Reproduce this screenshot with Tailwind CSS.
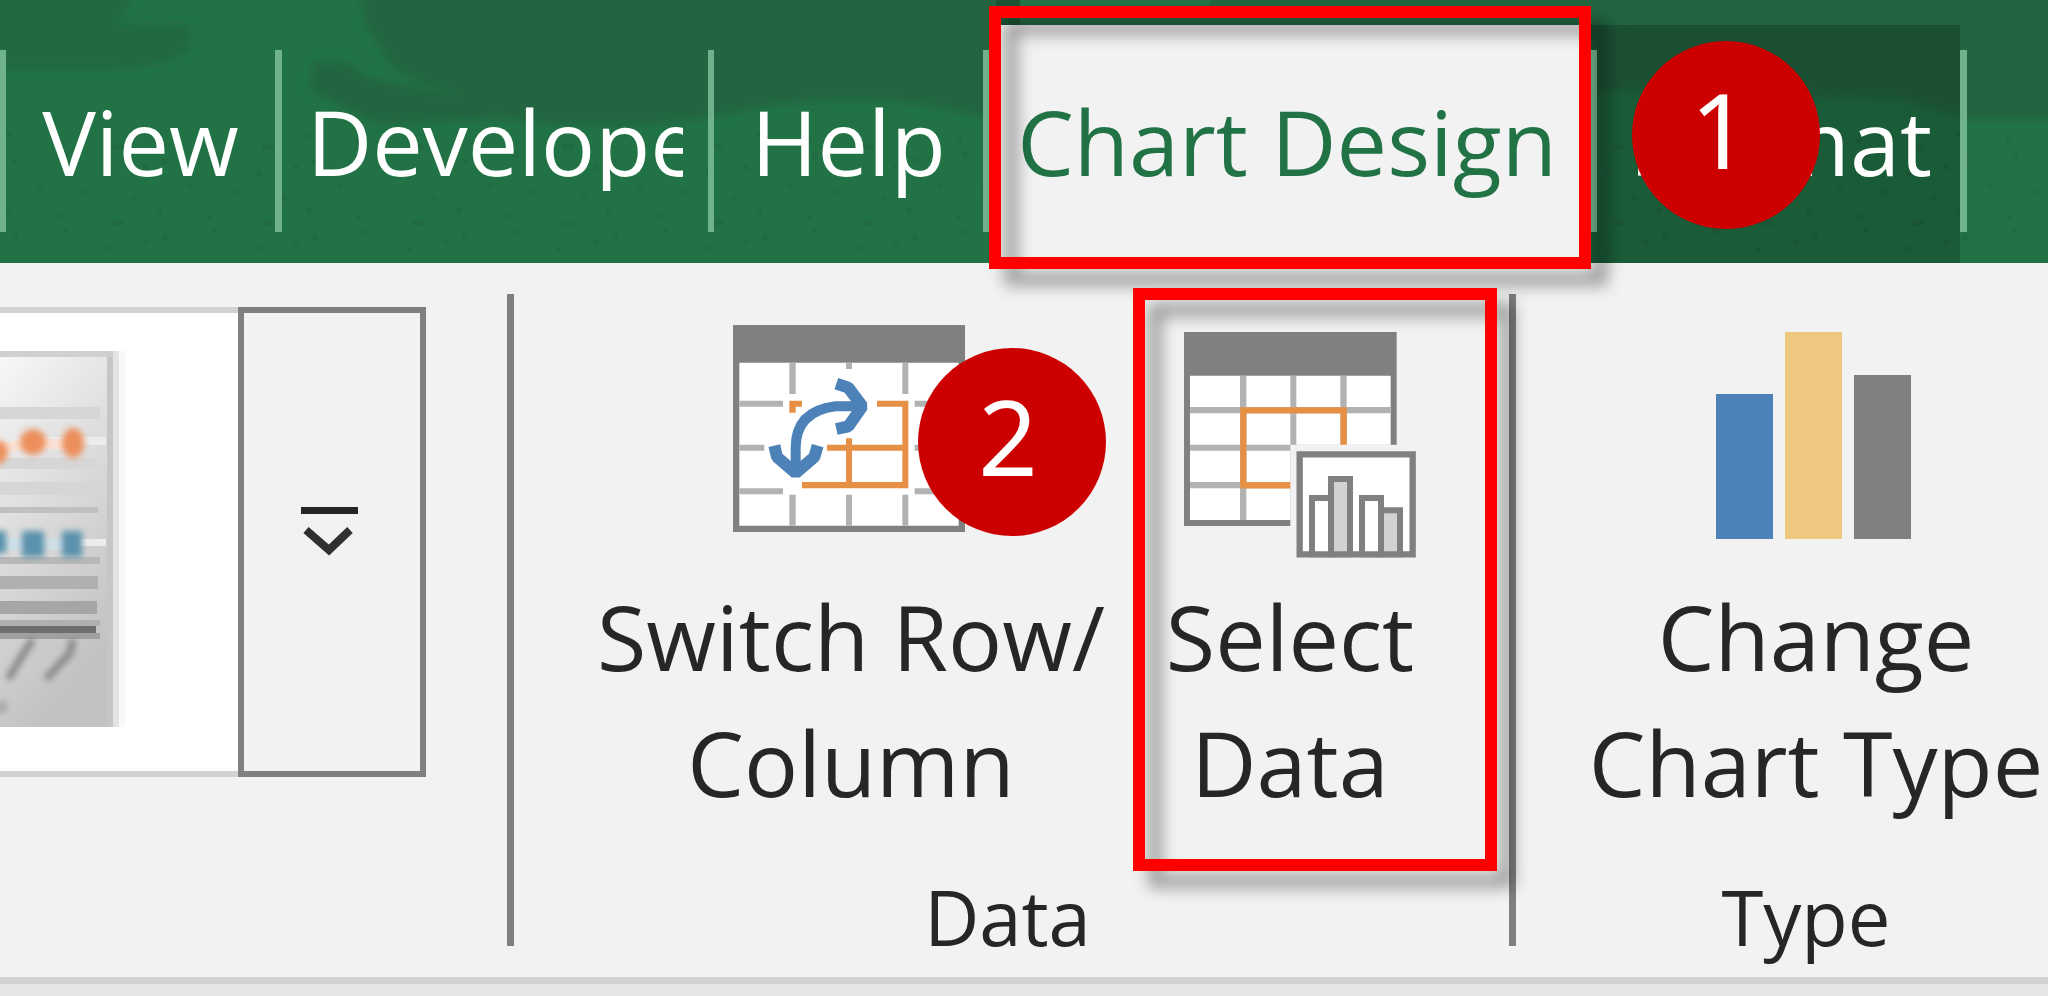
<!DOCTYPE html>
<html lang="en">
<head>
<meta charset="utf-8">
<title>Chart Design ribbon</title>
<script src="https://cdn.jsdelivr.net/npm/@tailwindcss/browser@4"></script>
</head>
<body class="relative flex min-h-screen flex-col overflow-hidden bg-[#e6e6e6] font-['Open_Sans','Noto_Sans',sans-serif] text-[90px] text-[#262626]">

<header class="relative bg-[#217346]">
  <!-- Title bar backdrop -->
  <svg class="absolute inset-0 h-full w-full" viewBox="0 0 2048 263" preserveAspectRatio="none" aria-hidden="true">
    <defs>
      <pattern id="grain" width="150" height="76" patternUnits="userSpaceOnUse">
        <path fill="#216c43" d="M12 6h6v6h-6zM62 0h6v6h-6zM106 18h6v6h-6zM37 31h6v6h-6zM81 37h6v6h-6zM131 43h6v6h-6zM6 56h6v6H6zM56 62h6v6h-6zM112 68h12v6h-12zM143 12h6v6h-6z"/>
      </pattern>
      <filter id="haze"><feGaussianBlur stdDeviation="5"/></filter>
    </defs>
    <g filter="url(#haze)">
      <path fill="#236841" d="M-20-20H138L125 12 110 24 190 25V50L165 62 120 69H-20Z"/>
      <path fill="#246540" d="M358-20H2070V119H1967L1900 100 1800 95 1597 90 989 118H985L960 112 930 106 880 100 830 100 780 104 740 112 700 119 640 125H560L500 118 380 124 345 108 310 90 313 62H345L368 78 410 86 440 92 470 95 425 85 395 70 378 45 365 24Z"/>
    </g>
    <path fill="#217346" d="M1020 0H1210V8H1020Z"/>
    <path fill="#1b5233" d="M996 0H1020V25H996Z"/>
    <path fill="url(#grain)" d="M0 130H2048V256H0Z"/>
  </svg>
  <nav class="relative flex h-[263px] items-stretch text-white" aria-label="Ribbon tabs">
    <span class="mt-[50px] h-[182px] w-[6px] shrink-0 bg-[#6fb28b]"></span>
    <button class="w-[269px] shrink-0 pt-[19px] leading-[100px]">View</button>
    <span class="mt-[50px] h-[182px] w-[7px] shrink-0 bg-[#6fb28b]"></span>
    <button class="w-[426px] shrink-0 pt-[19px] pr-[25px] pl-[25px] leading-[100px]"><span class="block overflow-hidden text-left whitespace-nowrap">Developer</span></button>
    <span class="mt-[50px] h-[182px] w-[6px] shrink-0 bg-[#6fb28b]"></span>
    <button class="w-[269px] shrink-0 pt-[19px] leading-[100px]">Help</button>
    <span class="mt-[50px] h-[182px] w-[6px] shrink-0 bg-[#6fb28b]"></span>
    <button class="mt-[25px] w-[602px] shrink-0 bg-[#f2f2f2] pr-[6px] pb-[6px] leading-[100px] whitespace-nowrap text-[#217346]" aria-current="page">Chart Design</button>
    <div class="mt-[25px] flex w-[369px] shrink-0 bg-black/20">
      <span class="mt-[25px] h-[182px] w-[6px] shrink-0 bg-[#6fb28b]"></span>
      <button class="flex-1 pr-[28px] pb-[6px] text-right leading-[100px]">Format</button>
    </div>
    <span class="mt-[50px] h-[182px] w-[7px] shrink-0 bg-[#6fb28b]"></span>
  </nav>
</header>

<main class="flex h-[721px] border-b-[7px] border-[#d2d2d2] bg-[#f2f2f2]">
  <!-- Chart styles gallery -->
  <section class="flex w-[507px] shrink-0 items-start pt-[44px]" aria-label="Chart Styles">
    <div class="flex h-[470px] w-[238px] items-start border-y-[6px] border-[#d2d2d2] bg-white pt-[38px]">
      <svg class="h-[376px] w-[125px]" viewBox="0 0 125 376" aria-label="Line chart style">
        <defs>
          <linearGradient id="face" x1="0" y1="0" x2="0.35" y2="1">
            <stop offset="0" stop-color="#f8f8f8"/><stop offset=".45" stop-color="#dedede"/><stop offset="1" stop-color="#c2c2c2"/>
          </linearGradient>
          <filter id="soft"><feGaussianBlur stdDeviation="3"/></filter>
        </defs>
        <path fill="#f8f8f8" d="M0 0h125v376H0z"/>
        <path fill="#e4e4e4" d="M0 0h119v376H0z"/>
        <path fill="url(#face)" d="M0 0h113v376H0z"/>
        <path fill="#d0d0d0" d="M0 0h113v6H0z"/>
        <path fill="#c6c6c6" d="M107 6h6v370h-6z"/>
        <path fill="#d6d6d6" d="M0 56h100v12H0zM0 107h96v11H0zM0 131h94v13H0z"/>
        <path fill="#c0c0c0" d="M0 156h98v6H0z"/>
        <path fill="#ececec" d="M0 86h106v8H0zM0 188h106v7H0z"/>
        <path fill="#b8b8b8" d="M0 206h100v7H0z"/>
        <path fill="#b0b0b0" d="M0 225h98v13H0z"/>
        <path fill="#a6a6a6" d="M0 250h97v13H0z"/>
        <path fill="#b0b0b0" d="M0 269h100v6H0z"/>
        <path fill="#6e6e6e" d="M0 275h96v7H0z"/>
        <path fill="#a0a0a0" d="M0 282h100v6H0z"/>
        <path fill="none" stroke="#f9e3d8" stroke-width="10" d="M0 97 34 92 73 94"/>
        <path fill="none" stroke="#cfdfe6" stroke-width="12" d="M0 193H80"/>
        <g filter="url(#soft)">
          <circle cx="33" cy="91" r="13" fill="#ec8f5c"/>
          <ellipse cx="73" cy="92" rx="11" ry="15" fill="#ec8f5c"/>
          <circle cx="-4" cy="101" r="12" fill="#ec8f5c"/>
          <path fill="#5a91ac" d="M22 180h22v26H22zM62 180h20v26H62zM-8 180H6v22H-8z"/>
          <path fill="none" stroke="#858585" stroke-width="7" d="M33 288 22 305 8 328M73 288 70 302 46 328"/>
          <path fill="#aaa" d="M-4 350H7v12H-4z"/>
        </g>
      </svg>
    </div>
    <button class="flex h-[470px] w-[188px] items-center justify-center border-[6px] border-[#808080] pr-[6px] pb-[20px]" aria-label="More chart styles">
      <svg class="h-[50px] w-[57px]" viewBox="0 0 57 50" aria-hidden="true">
        <path fill="#262626" d="M0 0h57v7H0z"/>
        <path fill="none" stroke="#303030" stroke-width="8" d="M5 23 28 43 49 23"/>
      </svg>
    </button>
  </section>

  <span class="mt-[31px] h-[652px] w-[7px] shrink-0 bg-[#808080]"></span>

  <section class="flex w-[995px] shrink-0 flex-col justify-between pt-[62px] pb-[20px]" aria-label="Data">
    <div class="flex pl-[77px]">
      <button class="flex w-[520px] flex-col items-center leading-[126px]">
        <span class="h-[248px] pr-[4px]">
          <svg class="h-[207px] w-[232px]" viewBox="98 76 696 621" aria-hidden="true">
            <path fill="#808080" d="M98 76h696v621H98z"/>
            <path fill="#fff" d="M117 189h658v489H117z"/>
            <path fill="#b2b2b2" d="M267 189h19v94h-19zM437 189h18v19h-18zM606 189h18v94h-18zM117 303h131v18H117zM117 435h75v18h-75zM117 566h131v18H117zM643 303h132v18H643zM643 435h132v18H643zM643 566h132v18H643zM267 585h19v93h-19zM437 585h18v93h-18zM606 585h18v93h-18z"/>
            <path fill="#e69045" fill-rule="evenodd" d="M267 303h38v18h-19v18h-19zM530 303h94v263H305v-19h132v-94h-57v-18h57v-19h18v19h151V321h-76zM455 453v94h151v-94z"/>
            <path fill="none" stroke="#4c82b8" stroke-width="30" d="M480 320H405Q286 335 286 445V510"/>
            <path fill="none" stroke="#4c82b8" stroke-width="36" stroke-linejoin="bevel" d="M408 252 444 264 486 320 444 380 408 388M222 438 230 472 286 520 342 472 352 438"/>
          </svg>
        </span>
        <span class="whitespace-nowrap">Switch Row/<br>Column</span>
      </button>
      <button class="ml-[29px] flex w-[300px] flex-col items-center leading-[126px]">
        <span class="h-[248px] pt-[7px] pl-[20px]">
          <svg class="h-[226px] w-[232px]" viewBox="192 156 696 678" aria-hidden="true">
            <path fill="#808080" d="M192 156h638v582H192z"/>
            <path fill="#fff" d="M210 287h602v433H210z"/>
            <path fill="#b2b2b2" d="M360 287h19v433h-19zM511 287h18v433h-18zM661 287h19v433h-19zM210 381h602v19H210zM210 494h602v18H210zM210 606h602v19H210z"/>
            <path fill="none" stroke="#e69045" stroke-width="19" d="M370 391h301v225H370z"/>
            <path fill="#f2f2f2" d="M511 494h380v345H511z"/>
            <path fill="#fff" stroke="#808080" stroke-width="19" d="M539 523h339v300H539z"/>
            <path fill="#fff" stroke="#808080" stroke-width="18" d="M576 654h57v169h-57zM726 654h57v169h-57z"/>
            <path fill="#d2d2d2" stroke="#808080" stroke-width="18" d="M633 597h57v226h-57zM783 691h57v132h-57z"/>
          </svg>
        </span>
        <span>Select<br>Data</span>
      </button>
    </div>
    <h2 class="pr-[8px] text-center text-[76px] leading-[80px]">Data</h2>
  </section>

  <span class="mt-[31px] h-[652px] w-[7px] shrink-0 bg-[#808080]"></span>

  <section class="flex flex-1 flex-col justify-between pt-[62px] pb-[20px]" aria-label="Type">
    <button class="flex flex-col items-center pl-[68px] leading-[126px]">
      <span class="h-[248px] pt-[7px] pr-[6px]">
        <svg class="h-[207px] w-[195px]" viewBox="0 0 195 207" aria-hidden="true">
          <path fill="#4c82b8" d="M0 62h57v145H0z"/>
          <path fill="#edc87e" d="M69 0h57v207H69z"/>
          <path fill="#808080" d="M138 43h57v164h-57z"/>
        </svg>
      </span>
      <span class="whitespace-nowrap">Change<br>Chart Type</span>
    </button>
    <h2 class="pl-[48px] text-center text-[76px] leading-[80px]">Type</h2>
  </section>
</main>

<!-- Step callouts laid over the ribbon -->
<div class="pointer-events-none absolute top-[6px] left-[989px] h-[263px] w-[602px] border-[12px] border-[#ff0000] drop-shadow-[16px_16px_8px_rgba(0,0,0,0.4)]"></div>
<div class="pointer-events-none absolute top-[288px] left-[1133px] h-[583px] w-[364px] border-[12px] border-[#ff0000] drop-shadow-[16px_16px_8px_rgba(0,0,0,0.4)]"></div>
<div class="absolute top-[41px] left-[1632px] flex h-[188px] w-[188px] items-center justify-center rounded-full bg-[#cc0000] pr-[12px] pb-[12px] font-['Noto_Sans',sans-serif] text-[104px] leading-[110px] text-white">1</div>
<div class="absolute top-[348px] left-[918px] flex h-[188px] w-[188px] items-center justify-center rounded-full bg-[#cc0000] pr-[8px] pb-[12px] font-['Noto_Sans',sans-serif] text-[104px] leading-[110px] text-white">2</div>
</body>
</html>
